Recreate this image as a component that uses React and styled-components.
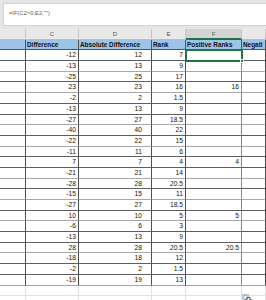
import React from 'react';
import styled, { createGlobalStyle } from 'styled-components';

const GlobalStyle = createGlobalStyle`
  html, body {
    margin: 0;
    padding: 0;
    background: #ffffff;
    overflow: hidden;
  }
  body {
    font-family: "Liberation Sans", Arial, sans-serif;
  }
`;

const ROW = '10.7px';
const COLS = '26px 53px 73px 34px 56px 24px';

const Page = styled.div`
  position: relative;
  width: 266px;
  height: 300px;
  overflow: hidden;
`;

const FormulaArea = styled.div`
  height: 29px;
  box-sizing: border-box;
  padding: 3px 0 3px 3px;
  background: #e6e6e6;
`;

const FormulaBox = styled.div`
  height: 23px;
  box-sizing: border-box;
  background: #ffffff;
  border: 1px solid #d2d2d2;
  border-right: none;
  padding: 6px 0 0 5px;
  font-size: 5.6px;
  color: #5a5a5a;
  letter-spacing: 0.1px;
`;

const Grid = styled.div`
  display: grid;
  grid-template-columns: ${COLS};
  grid-auto-rows: ${ROW};
`;

const Letter = styled.div`
  box-sizing: border-box;
  background: ${p => (p.$active ? '#d4d4d4' : '#e9e9e9')};
  color: ${p => (p.$active ? '#217346' : '#505050')};
  border-right: 1px solid #c6c6c6;
  border-bottom: ${p => (p.$active ? '2px solid #217346' : '1px solid #bdbdbd')};
  font-size: 6px;
  text-align: center;
  line-height: 10px;
`;

const Head = styled.div`
  box-sizing: border-box;
  background: #9dc3e6;
  border-right: 1px solid #555555;
  border-bottom: 1px solid #555555;
  font-size: 6.4px;
  font-weight: bold;
  color: #111111;
  line-height: 10px;
  padding-left: 1px;
  white-space: nowrap;
  overflow: hidden;
`;

const Cell = styled.div`
  position: relative;
  box-sizing: border-box;
  border-right: 1px solid ${p => (p.$light ? '#8a8a8a' : '#4e4e4e')};
  border-bottom: 1px solid ${p => (p.$thick ? '#a8a8a8' : '#5e5e5e')};
  font-size: 6.7px;
  color: #111111;
  text-align: right;
  padding-right: ${p => p.$pad || 2}px;
  line-height: 10px;
  white-space: nowrap;
  outline: ${p => (p.$selected ? '2px solid #217346' : 'none')};
  outline-offset: -1px;
  z-index: ${p => (p.$selected ? 1 : 0)};
`;

const Handle = styled.span`
  position: absolute;
  right: -3px;
  bottom: -3px;
  width: 4px;
  height: 4px;
  background: #217346;
  border: 1px solid #ffffff;
  box-sizing: border-box;
`;

const Blank = styled.div`
  box-sizing: border-box;
  border-right: 1px solid #e0e0e0;
  border-bottom: 1px solid #e0e0e0;
`;

const Overlay = styled.div`
  position: absolute;
  left: ${p => p.$x}px;
  top: ${p => p.$y}px;
`;

const diff = [-12, -13, -25, 23, -2, -13, -27, -40, -22, -11, 7, -21, -28, -15, -27, 10, -6, -13, 28, -18, -2, -19];
const rank = [7, 9, 17, 16, 1.5, 9, 18.5, 22, 15, 6, 4, 14, 20.5, 11, 18.5, 5, 3, 9, 20.5, 12, 1.5, 13];
const thick = [1, 3, 6, 8, 11, 13, 15, 18, 21];

const PasteIcon = () => (
  <svg width="8" height="8" viewBox="0 0 8 8">
    <rect x="0.5" y="0.5" width="6" height="6" fill="#dfe8f3" stroke="#9aa9bb" strokeWidth="0.6" />
    <rect x="2" y="1.5" width="3" height="3.5" fill="#ffffff" stroke="#5b7fae" strokeWidth="0.5" />
  </svg>
);

const CrossCursor = () => (
  <svg width="9" height="9" viewBox="0 0 9 9">
    <path
      d="M3 0.5h3v2.5h2.5v3H6v2.5H3V6H0.5V3H3z"
      fill="#ffffff"
      stroke="#222222"
      strokeWidth="0.8"
    />
  </svg>
);

export default function App() {
  return (
    <Page>
      <GlobalStyle />
      <FormulaArea>
        <FormulaBox>=IF(C2&gt;0,E2,"")</FormulaBox>
      </FormulaArea>
      <Grid>
        <Letter />
        <Letter>C</Letter>
        <Letter>D</Letter>
        <Letter>E</Letter>
        <Letter $active>F</Letter>
        <Letter />

        <Head />
        <Head>Difference</Head>
        <Head>Absolute Difference</Head>
        <Head>Rank</Head>
        <Head>Positive Ranks</Head>
        <Head>Negati</Head>

        {diff.map((d, i) => {
          const t = thick.includes(i);
          const pos = d > 0 ? rank[i] : '';
          return (
            <React.Fragment key={i}>
              <Cell $thick={t} />
              <Cell $thick={t}>{d}</Cell>
              <Cell $thick={t} $pad={9}>{Math.abs(d)}</Cell>
              <Cell $thick={t}>{rank[i]}</Cell>
              <Cell $thick={t} $light $selected={i === 0}>
                {pos}
                {i === 0 && <Handle />}
              </Cell>
              <Cell $thick={t} />
            </React.Fragment>
          );
        })}

        {[0, 1].map(r => (
          <React.Fragment key={`b${r}`}>
            <Blank />
            <Blank />
            <Blank />
            <Blank />
            <Blank />
            <Blank />
          </React.Fragment>
        ))}
      </Grid>
      <Overlay $x={242} $y={288}>
        <PasteIcon />
      </Overlay>
      <Overlay $x={244} $y={292}>
        <CrossCursor />
      </Overlay>
    </Page>
  );
}
